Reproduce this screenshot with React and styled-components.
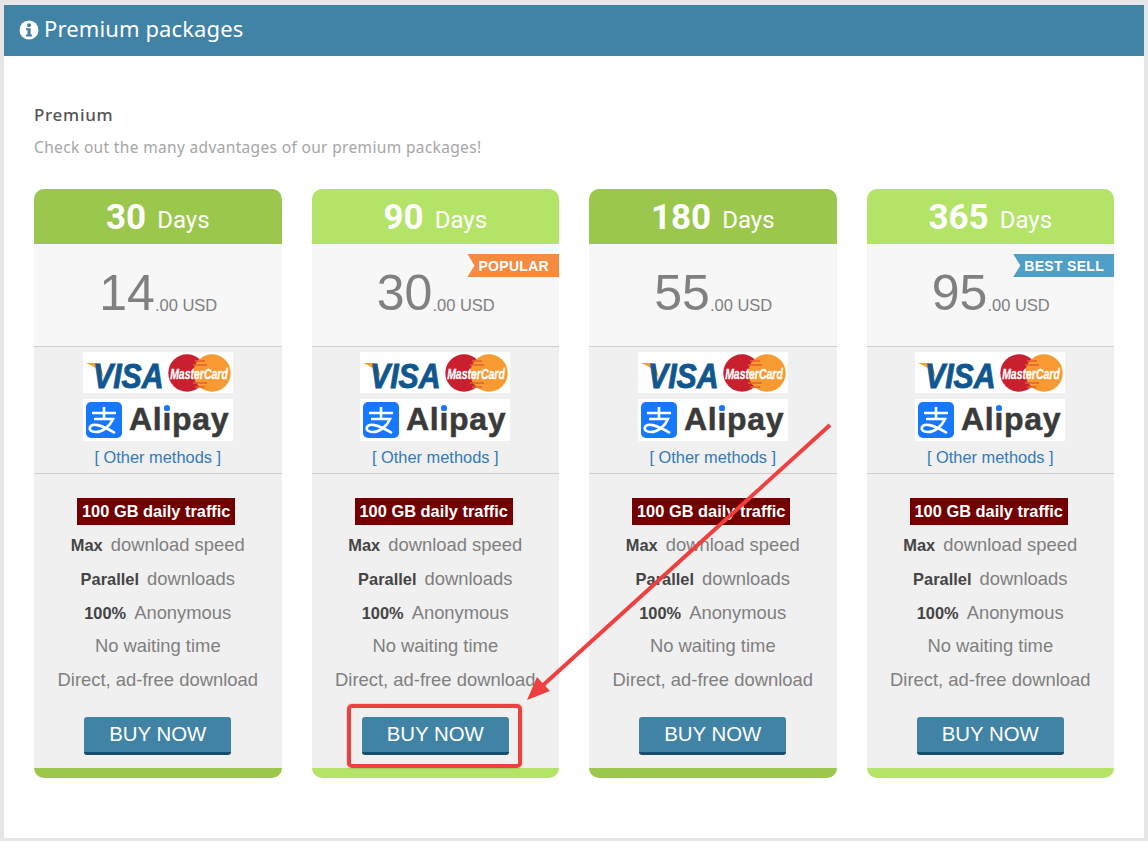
import React from 'react';
import styled, {createGlobalStyle} from 'styled-components';

const Global = createGlobalStyle`
  html, body { margin: 0; padding: 0; }
  body {
    width: 1148px;
    height: 841px;
    overflow: hidden;
    background: #e6e6e6;
    font-family: "Liberation Sans", Arial, sans-serif;
  }
`;

const Page = styled.div`
  position: relative;
  width: 1148px;
  height: 841px;
  padding: 5px 4px 3px;
  box-sizing: border-box;
`;
const Panel = styled.div`
  height: 100%;
  background: #fff;
`;
const PanelHead = styled.div`
  height: 51px;
  box-sizing: border-box;
  display: flex;
  align-items: center;
  gap: 5px;
  padding: 0 15px 1px;
  background: #4183a5;
  color: #fff;
  font: 400 22px/1 "Noto Sans", sans-serif;
  letter-spacing: 0.12px;
  span { position: relative; top: -2px; }
`;
const Body = styled.div`
  padding: 48px 30px 0;
`;
const Title = styled.div`
  font: 500 17px/22px "Noto Sans", sans-serif;
  letter-spacing: 0.7px;
  color: #555;
`;
const Sub = styled.div`
  margin-top: 10px;
  font: 400 15.5px/22px "Noto Sans", sans-serif;
  letter-spacing: 0.34px;
  color: #a6a6a6;
`;
const Grid = styled.div`
  margin-top: 31px;
  display: grid;
  grid-template-columns: repeat(4, 247.5px);
  column-gap: 30px;
`;
const Card = styled.div`
  background: #f0f0f0;
  border-radius: 10px;
  overflow: hidden;
  text-align: center;
  border-bottom: 10px solid ${p => p.$color};
`;
const CardHead = styled.div`
  height: 55px;
  padding-top: 6px;
  box-sizing: border-box;
  background: ${p => p.$color};
  color: #fff;
  display: flex;
  align-items: center;
  justify-content: center;
  gap: 11px;
  font: 400 24px/1 Roboto, sans-serif;
  b {
    font-size: 35px;
    font-weight: 700;
    position: relative;
    top: -2px;
  }
`;
const PriceBox = styled.div`
  position: relative;
  height: 102px;
  padding: 0 0 4px 1px;
  box-sizing: border-box;
  background: #f7f7f7;
  display: flex;
  align-items: center;
  justify-content: center;
  color: #808080;
  font-size: 16.5px;
  span.big {
    font-size: 50px;
    line-height: 1;
  }
  span.small {
    position: relative;
    top: 12px;
  }
`;
const Ribbon = styled.div`
  position: absolute;
  top: 10px;
  right: 0;
  height: 23px;
  padding: 0 10px 0 11px;
  background: ${p => p.$color};
  color: #fff;
  font: 700 14px/24px "Liberation Sans", sans-serif;
  letter-spacing: 0.3px;
  clip-path: polygon(0 0, 100% 0, 100% 100%, 0 100%, 7px 50%);
`;
const Payment = styled.div`
  height: 128px;
  box-sizing: border-box;
  border-top: 1px solid #cfcfcf;
  border-bottom: 1px solid #cfcfcf;
  padding-top: 5px;
  display: flex;
  flex-direction: column;
  align-items: center;
`;
const LogoSvg = styled.svg`
  display: block;
  background: #fff;
  margin-bottom: 6px;
`;
const Other = styled.a`
  margin-top: -1px;
  color: #337ab7;
  font-size: 16.4px;
  line-height: 22px;
`;
const Features = styled.div`
  padding-top: 24px;
  height: 294px;
  box-sizing: border-box;
  display: flex;
  flex-direction: column;
  align-items: center;
`;
const Traffic = styled.div`
  height: 27px;
  padding: 0 5px;
  margin: 0 3px 3px 0;
  background: #720000;
  color: #fff;
  font: 700 16.4px/27px "Liberation Sans", sans-serif;
`;
const Feature = styled.div`
  height: 33.75px;
  line-height: 33.75px;
  color: #7f7f7f;
  font-size: 18.4px;
  white-space: nowrap;
  b {
    color: #444;
    font-size: 16.4px;
    margin-right: 8px;
  }
`;
const Buy = styled.button`
  margin-top: 20px;
  width: 147px;
  height: 38px;
  border: 0;
  border-bottom: 3px solid #164e6b;
  border-radius: 3px;
  background: #4183a5;
  color: #fff;
  font: 400 20.4px/1 "Liberation Sans", sans-serif;
  padding: 0;
`;
const Highlight = styled.div`
  position: absolute;
  left: 347px;
  top: 704px;
  width: 175px;
  height: 64px;
  box-sizing: border-box;
  border: 4px solid #ef4040;
  border-radius: 5px;
  box-shadow: 0 0 2px rgba(0, 0, 0, .35);
`;
const ArrowSvg = styled.svg`
  position: absolute;
  left: 0;
  top: 0;
  pointer-events: none;
`;

const plans = [
  {days: 30, price: 14, color: '#9bc84c'},
  {days: 90, price: 30, color: '#b3e468', ribbon: 'POPULAR', ribbonColor: '#f58b41'},
  {days: 180, price: 55, color: '#9bc84c'},
  {days: 365, price: 95, color: '#b3e468', ribbon: 'BEST SELL', ribbonColor: '#4f9fc7'}
];

function InfoIcon() {
  return (
    <svg width="20" height="20" viewBox="0 0 20 20">
      <circle cx="10" cy="10" r="9.5" fill="#fff"/>
      <circle cx="10" cy="5.2" r="2" fill="#4183a5"/>
      <path d="M7 8.3h4.6v6.2H13v1.9H7v-1.9h1.5v-4.3H7z" fill="#4183a5"/>
    </svg>
  );
}

function CardLogos() {
  return (
    <LogoSvg width="150" height="41" viewBox="0 0 150 41">
      <path d="M3 11h9c3 0 5 1 6 4l3 12C18 19 11 14 3 11z" fill="#f2a31f"/>
      <text x="0" y="0" fontFamily="Liberation Sans" fontWeight="700" fontStyle="italic" fontSize="36" fill="#11578f" stroke="#11578f" strokeWidth="1" transform="translate(10 36) scale(.84 1)">VISA</text>
      <circle cx="104" cy="21" r="18.7" fill="#c9202f"/>
      <circle cx="129" cy="21" r="18.7" fill="#f79a31"/>
      <path d="M112 9h10M110 13h14M110 31h14M112 35h10" stroke="#e2622a" strokeWidth="1.6"/>
      <text x="0" y="0" textAnchor="middle" fontFamily="Liberation Sans" fontWeight="700" fontStyle="italic" fontSize="15" fill="#fff" stroke="#fff" strokeWidth=".3" transform="translate(116 27) scale(.7 1)">MasterCard</text>
    </LogoSvg>
  );
}

function AlipayLogo() {
  return (
    <LogoSvg width="150" height="42" viewBox="0 0 150 42">
      <rect x="3" y="3" width="36" height="36" rx="5" fill="#1677ff"/>
      <path d="M9 14h24M21 8v12M11 20h19c-3 7-10 13-17 13-5 0-7-2-6-5 2-4 10-3 25 6" stroke="#fff" strokeWidth="2.6" fill="none"/>
      <text x="46" y="31" fontFamily="Liberation Sans" fontWeight="700" fontSize="32" letterSpacing=".7" fill="#3a3a3a" stroke="#3a3a3a" strokeWidth=".5">Alipay</text>
      <circle cx="84" cy="9" r="3" fill="#1677ff"/>
    </LogoSvg>
  );
}

function PlanCard({plan}) {
  return (
    <Card $color={plan.color}>
      <CardHead $color={plan.color}><b>{plan.days}</b>Days</CardHead>
      <PriceBox>
        {plan.ribbon && <Ribbon $color={plan.ribbonColor}>{plan.ribbon}</Ribbon>}
        <span className="big">{plan.price}</span>
        <span className="small">.00 USD</span>
      </PriceBox>
      <Payment>
        <CardLogos/>
        <AlipayLogo/>
        <Other>[ Other methods ]</Other>
      </Payment>
      <Features>
        <Traffic>100 GB daily traffic</Traffic>
        <Feature><b>Max</b>download speed</Feature>
        <Feature><b>Parallel</b>downloads</Feature>
        <Feature><b>100%</b>Anonymous</Feature>
        <Feature>No waiting time</Feature>
        <Feature>Direct, ad-free download</Feature>
        <Buy>BUY NOW</Buy>
      </Features>
    </Card>
  );
}

export default function App() {
  return (
    <Page>
      <Global/>
      <Panel>
        <PanelHead><InfoIcon/><span>Premium packages</span></PanelHead>
        <Body>
          <Title>Premium</Title>
          <Sub>Check out the many advantages of our premium packages!</Sub>
          <Grid>
            {plans.map(p => <PlanCard key={p.days} plan={p}/>)}
          </Grid>
        </Body>
      </Panel>
      <Highlight/>
      <ArrowSvg width="1148" height="841" viewBox="0 0 1148 841">
        <path d="M830 425L541 687" stroke="#ef4040" strokeWidth="4"/>
        <path d="M527 700l23-9-13-14z" fill="#ef4040"/>
      </ArrowSvg>
    </Page>
  );
}
